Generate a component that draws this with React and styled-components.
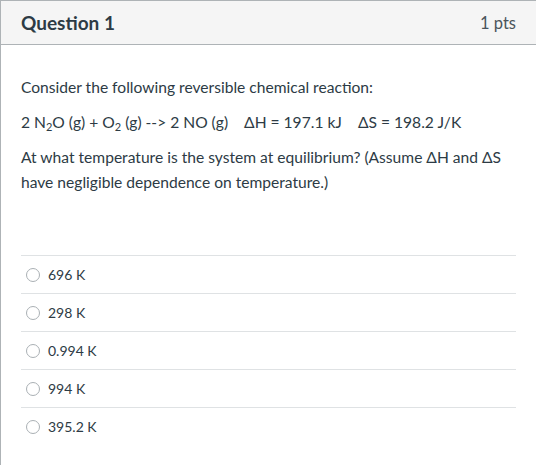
import styled, { createGlobalStyle } from "styled-components";

const GlobalStyle = createGlobalStyle`
  body {
    margin: 0;
    background: #fff;
    font-family: Lato, "Open Sans", sans-serif;
    color: #2d3b45;
  }
`;

const Card = styled.div`
  width: 560px;
  height: 470px;
  border-top: 1px solid #aeb3b6;
  border-left: 1px solid #aeb3b6;
  box-sizing: border-box;
`;

const Header = styled.div`
  display: flex;
  align-items: center;
  justify-content: space-between;
  height: 44px;
  padding: 0 21px 0 20px;
  width: 536px;
  box-sizing: border-box;
  background: #f5f5f5;
  border-bottom: 1px solid #aeb3b6;
`;

const Title = styled.h2`
  margin: 0;
  font-size: 19px;
  font-weight: 700;
  color: #2d3b45;
`;

const Points = styled.span`
  font-size: 16.5px;
  font-weight: 400;
  color: #4a545b;
`;

const Body = styled.div`
  width: 536px;
  box-sizing: border-box;
  padding: 30px 20px 0 20px;
`;

const Para = styled.p`
  margin: 0 0 10px 0;
  font-size: 15.6px;
  line-height: 25px;
`;

const Sub = styled.sub`
  font-size: 11px;
  line-height: 0;
  vertical-align: -3px;
`;

const Gap = styled.span`
  display: inline-block;
  width: ${(p) => p.w}px;
`;

const Answers = styled.div`
  margin-top: 60px;
  width: 495px;
`;

const Answer = styled.label`
  display: flex;
  align-items: center;
  height: 37px;
  border-top: 1px solid #dfe2e4;
  font-size: 14px;
  color: #2d3b45;
`;

const Radio = styled.span`
  width: 12px;
  height: 12px;
  border: 1px solid #aab0b4;
  border-radius: 50%;
  margin: 0 8px 0 5px;
  background: #fff;
`;

const answers = ["696 K", "298 K", "0.994 K", "994 K", "395.2 K"];

export default function App() {
  return (
    <>
      <GlobalStyle />
      <Card>
        <Header>
          <Title>Question 1</Title>
          <Points>1 pts</Points>
        </Header>
        <Body>
          <Para>Consider the following reversible chemical reaction:</Para>
          <Para>
            2 N<Sub>2</Sub>O (g) + O<Sub>2</Sub> (g) --&gt; 2 NO (g)
            <Gap w={16} />ΔH = 197.1 kJ<Gap w={16} />ΔS = 198.2 J/K
          </Para>
          <Para>
            At what temperature is the system at equilibrium? (Assume ΔH and ΔS
            have negligible dependence on temperature.)
          </Para>
          <Answers>
            {answers.map((a) => (
              <Answer key={a}>
                <Radio />
                {a}
              </Answer>
            ))}
          </Answers>
        </Body>
      </Card>
    </>
  );
}
